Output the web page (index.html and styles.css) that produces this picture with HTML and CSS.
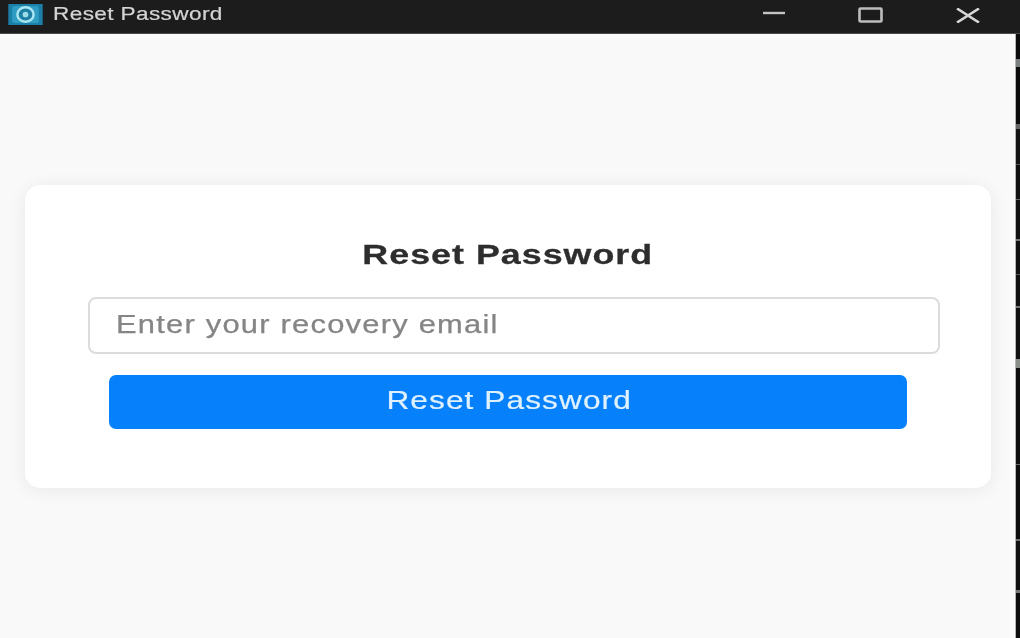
FILE: index.html
```html
<!DOCTYPE html>
<html lang="en">
<head>
<meta charset="utf-8">
<title>Reset Password</title>
<link rel="stylesheet" href="styles.css">
</head>
<body>
<div class="window">
  <header class="titlebar">
    <div class="app">
      <svg class="app-icon" viewBox="0 0 36 22" aria-hidden="true">
        <rect width="36" height="22" fill="#1b7fa8"/>
        <rect x="4" y="2" width="28" height="18" rx="3" fill="#2f9cc2"/>
        <ellipse cx="18" cy="11" rx="8.5" ry="7.5" fill="#1f7ea3" stroke="#a9e6f2" stroke-width="2.6"/>
        <circle cx="18" cy="11" r="3" fill="#9adbe9"/>
      </svg>
      <span class="app-name">Reset Password</span>
    </div>
    <div class="controls">
      <svg class="ctl ctl-min" viewBox="0 0 24 12" aria-hidden="true"><path d="M1 6H23" stroke="#c4c4c4" stroke-width="2.4" fill="none"/></svg>
      <svg class="ctl ctl-max" viewBox="0 0 25 16" aria-hidden="true"><rect x="1.5" y="1.5" width="22" height="13" rx="1" stroke="#bdbdbd" stroke-width="2.6" fill="none"/></svg>
      <svg class="ctl ctl-close" viewBox="0 0 24 15" aria-hidden="true"><path d="M1 .5L23 14.5M23 .5L1 14.5" stroke="#d6d6d6" stroke-width="2.6" fill="none"/></svg>
    </div>
  </header>
  <div class="body-row">
    <main class="content">
      <section class="card">
        <h1 class="card-title"><span class="wide-title">Reset Password</span></h1>
        <div class="field"><input class="email" type="email" placeholder="Enter your recovery email"></div>
        <button class="submit" type="button"><span class="wide-label">Reset Password</span></button>
      </section>
    </main>
    <div class="edge"></div>
  </div>
</div>
</body>
</html>
```
FILE: styles.css
```css
* { box-sizing: border-box; }
html, body { margin: 0; height: 100%; }
body { background: #f9f9f9; font-family: "Liberation Sans", Arial, sans-serif; overflow: hidden; }
.window { width: 1020px; height: 638px; display: flex; flex-direction: column; filter: blur(.6px); }
.titlebar { height: 34px; flex: none; background: #1c1c1c; border-bottom: 1px solid #4a4a4a; display: flex; align-items: center; justify-content: space-between; }
.app { display: flex; align-items: center; gap: 10px; padding-left: 8px; margin-top: -5px; }
.app-icon { width: 35px; height: 21px; display: block; }
.app-name { color: #d4d4d4; font-size: 18px; letter-spacing: .3px; display: inline-block; transform: scaleX(1.255); transform-origin: left center; -webkit-text-stroke: .2px #d4d4d4; }
.controls { display: flex; align-items: center; padding-right: 40px; margin-top: -3px; }
.ctl { display: block; }
.ctl-min { width: 24px; height: 12px; margin-top: -4px; }
.ctl-max { width: 25px; height: 16px; margin-left: 72px; }
.ctl-close { width: 24px; height: 15px; margin-left: 73px; }
.body-row { flex: 1; display: flex; min-height: 0; }
.content { flex: 1; background: #f9f9f9; padding: 151px 24px 0 25px; }
.edge { width: 5px; flex: none; border-left: 1px solid #b5b5b5; background: linear-gradient(180deg, #0c0c0c 0 25px, #7c8080 25px 33px, #0c0c0c 33px 90px, #666 90px 95px, #141414 95px 130px, #555 130px 131px, #111 131px 165px, #666 165px 166px, #101010 166px 205px, #777 205px 207px, #111 207px 240px, #555 240px 241px, #101010 241px 272px, #777 272px 274px, #111 274px 325px, #8a8f8a 325px 334px, #0d0d0d 334px 430px, #666 430px 431px, #0d0d0d 431px 505px, #707070 505px 507px, #111 507px 556px, #777 556px 559px, #0d0d0d 559px 604px); }
.card { height: 303px; background: #fff; border-radius: 15px; box-shadow: 0 2px 18px rgba(0,0,0,.07); display: flex; flex-direction: column; align-items: center; padding-top: 54px; }
.card-title { margin: 0; color: #2d2d2d; font-size: 28px; line-height: 32px; font-weight: 700; }
.wide-title { display: inline-block; letter-spacing: .8px; transform: scaleX(1.278); -webkit-text-stroke: .3px #2d2d2d; }
.field { width: 852px; height: 57px; margin-top: 26px; margin-left: 12px; border: 2px solid #dcdcdc; border-radius: 8px; background: #fff; overflow: hidden; padding-left: 26px; }
.email { display: block; width: 640px; height: 51px; border: 0; background: none; padding: 0; font: 400 25px "Liberation Sans", Arial, sans-serif; letter-spacing: 1px; color: #333; outline: none; transform: scaleX(1.235); transform-origin: left center; }
.email::placeholder { color: #858585; opacity: 1; -webkit-text-stroke: .25px #858585; }
.submit { width: 798px; height: 54px; margin-top: 21px; padding: 0 0 4px; border: 0; border-radius: 7px; background: #0680fb; color: #dff1ff; font: 400 26px "Liberation Sans", Arial, sans-serif; }
.wide-label { display: inline-block; letter-spacing: .9px; transform: scaleX(1.216) translateX(1px); -webkit-text-stroke: .2px #dff1ff; }
```
